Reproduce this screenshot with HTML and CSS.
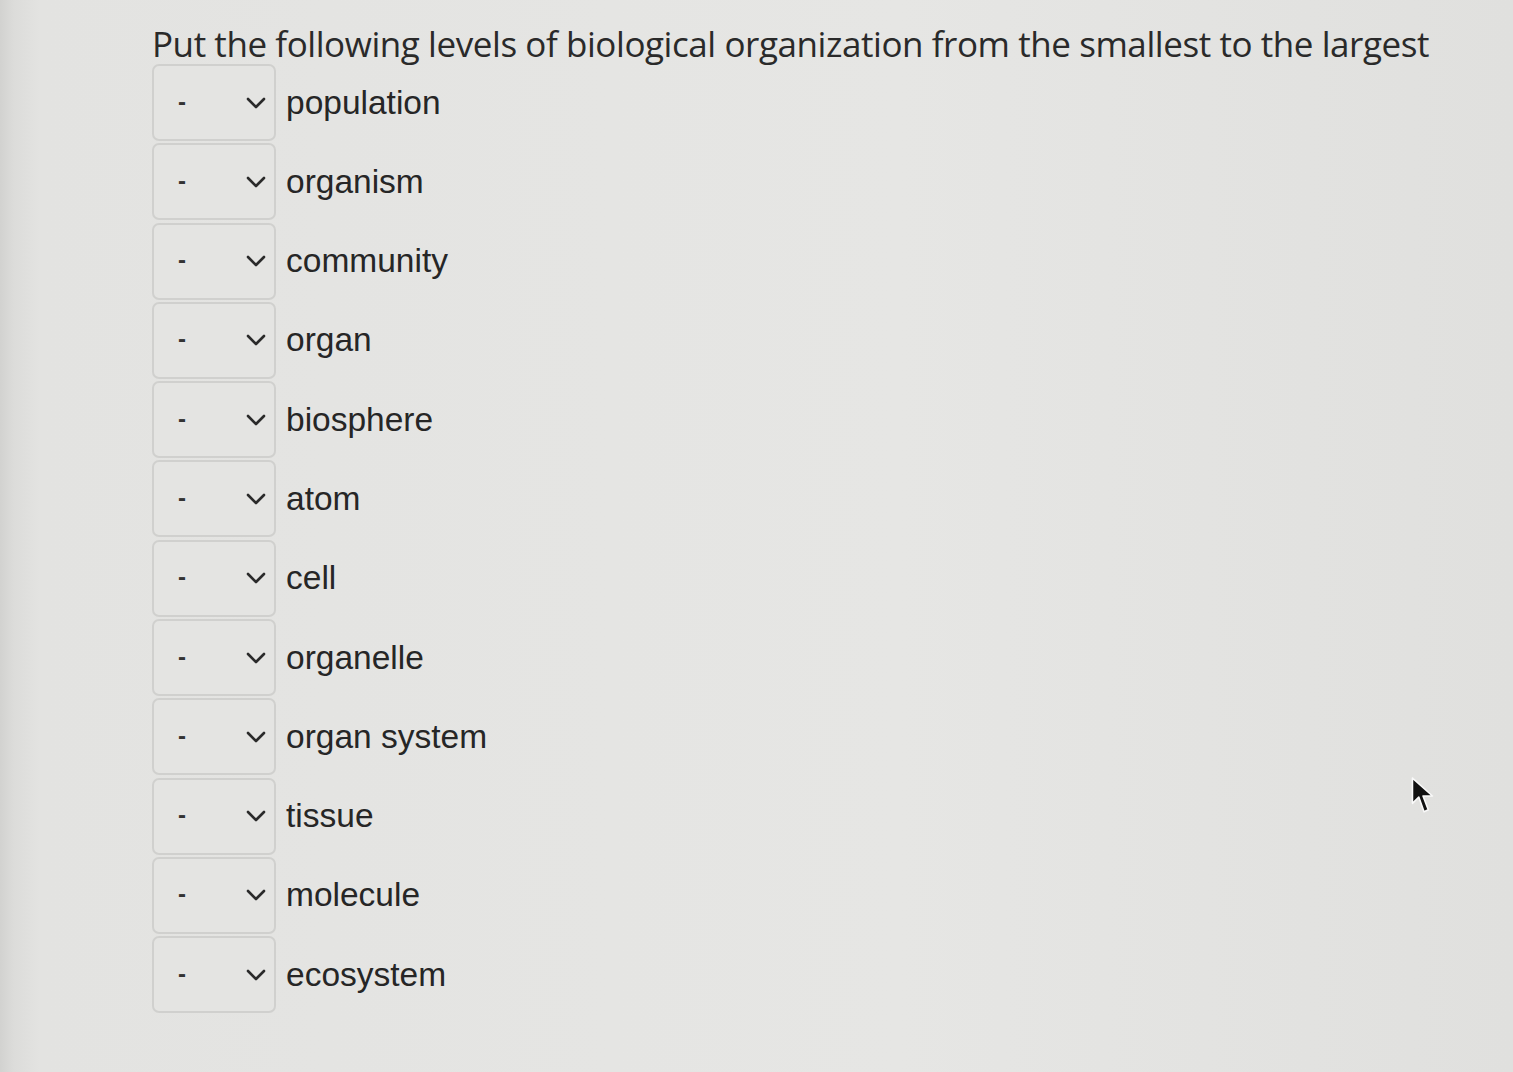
FILE: index.html
```html
<!DOCTYPE html>
<html lang="en">
<head>
    <meta charset="UTF-8">
    <meta name="viewport" content="width=device-width, initial-scale=1.0">
    <title>Levels of Biological Organization</title>
    <link rel="stylesheet" href="styles.css">
</head>
<body>
    <div class="screen">
        <div class="question">
            <h1>Put the following levels of biological organization from the smallest to the largest</h1>
            <div class="items">
                <div class="item"><div class="pick"><span class="dash">-</span><svg class="chev" viewBox="0 0 20 12"><path d="M2 2 L10 10 L18 2"/></svg></div><span class="label">population</span></div>
                <div class="item"><div class="pick"><span class="dash">-</span><svg class="chev" viewBox="0 0 20 12"><path d="M2 2 L10 10 L18 2"/></svg></div><span class="label">organism</span></div>
                <div class="item"><div class="pick"><span class="dash">-</span><svg class="chev" viewBox="0 0 20 12"><path d="M2 2 L10 10 L18 2"/></svg></div><span class="label">community</span></div>
                <div class="item"><div class="pick"><span class="dash">-</span><svg class="chev" viewBox="0 0 20 12"><path d="M2 2 L10 10 L18 2"/></svg></div><span class="label">organ</span></div>
                <div class="item"><div class="pick"><span class="dash">-</span><svg class="chev" viewBox="0 0 20 12"><path d="M2 2 L10 10 L18 2"/></svg></div><span class="label">biosphere</span></div>
                <div class="item"><div class="pick"><span class="dash">-</span><svg class="chev" viewBox="0 0 20 12"><path d="M2 2 L10 10 L18 2"/></svg></div><span class="label">atom</span></div>
                <div class="item"><div class="pick"><span class="dash">-</span><svg class="chev" viewBox="0 0 20 12"><path d="M2 2 L10 10 L18 2"/></svg></div><span class="label">cell</span></div>
                <div class="item"><div class="pick"><span class="dash">-</span><svg class="chev" viewBox="0 0 20 12"><path d="M2 2 L10 10 L18 2"/></svg></div><span class="label">organelle</span></div>
                <div class="item"><div class="pick"><span class="dash">-</span><svg class="chev" viewBox="0 0 20 12"><path d="M2 2 L10 10 L18 2"/></svg></div><span class="label">organ system</span></div>
                <div class="item"><div class="pick"><span class="dash">-</span><svg class="chev" viewBox="0 0 20 12"><path d="M2 2 L10 10 L18 2"/></svg></div><span class="label">tissue</span></div>
                <div class="item"><div class="pick"><span class="dash">-</span><svg class="chev" viewBox="0 0 20 12"><path d="M2 2 L10 10 L18 2"/></svg></div><span class="label">molecule</span></div>
                <div class="item"><div class="pick"><span class="dash">-</span><svg class="chev" viewBox="0 0 20 12"><path d="M2 2 L10 10 L18 2"/></svg></div><span class="label">ecosystem</span></div>
            </div>
        </div>
        <!-- mouse pointer -->
        <svg class="pointer" viewBox="0 0 24 38">
            <path d="M2 2 L2 26 L8 20 L13 34 L17 32 L12 19 L21 19 Z" fill="#111" stroke="#fafafa" stroke-width="1.5" stroke-linejoin="round"/>
        </svg>
    </div>
</body>
</html>
```

FILE: styles.css
```css
body {
    margin: 0;
    background-color: #e2e2e0;
    font-family: "Liberation Sans", Arial, sans-serif;
    color: #2b2b2b;
}

.screen {
    position: relative;
    width: 1513px;
    height: 1072px;
    overflow: hidden;
    background: linear-gradient(to right, #d2d2d0 0px, #dcdcda 14px, #e3e3e1 40px, #e6e6e4 900px, #e0e0de 1513px);
}

.question {
    padding: 22px 0 0 152px;
}

h1 {
    margin: 0;
    font-family: "Open Sans", sans-serif;
    font-weight: 400;
    font-size: 35px;
    letter-spacing: -0.43px;
    line-height: 44px;
    color: #2a2a2a;
}

.items {
    display: flex;
    flex-direction: column;
    gap: 2.3px;
    margin-top: -2px;
}

.item {
    display: flex;
    align-items: center;
    gap: 10px;
}

.pick {
    width: 124px;
    height: 77px;
    box-sizing: border-box;
    border: 2px solid #d0d0ce;
    border-radius: 7px;
    background-color: #e4e4e2;
    display: flex;
    align-items: center;
    padding: 0 8px 0 24px;
    justify-content: space-between;
}

.dash {
    font-size: 24px;
    font-weight: 700;
    color: #333;
    margin-top: -2px;
}

.chev {
    width: 20px;
    height: 12px;
    fill: none;
    stroke: #2a2a2a;
    stroke-width: 2.6;
    stroke-linecap: round;
    stroke-linejoin: round;
}

.label {
    font-size: 33.5px;
    color: #262626;
}

.pointer {
    position: absolute;
    left: 1410px;
    top: 776px;
    width: 26px;
    height: 40px;
}
```
